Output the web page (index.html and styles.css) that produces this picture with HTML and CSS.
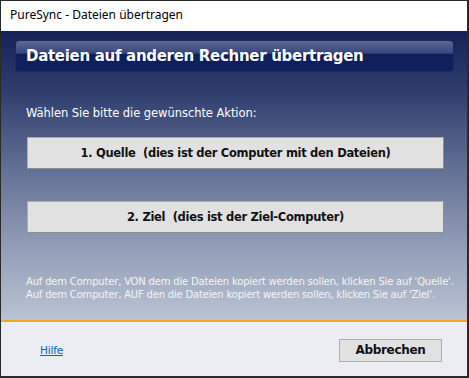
FILE: index.html
```html
<!DOCTYPE html>
<html>
<head>
<meta charset="utf-8">
<link rel="stylesheet" href="styles.css">
</head>
<body>
<div class="window">
  <div class="titlebar">PureSync - Dateien übertragen</div>
  <div class="main">
    <div class="heading"><span>Dateien auf anderen Rechner übertragen</span></div>
    <p class="prompt">Wählen Sie bitte die gewünschte Aktion:</p>
    <div class="choices">
      <button class="choice">1. Quelle&nbsp; (dies ist der Computer mit den Dateien)</button>
      <button class="choice">2. Ziel&nbsp; (dies ist der Ziel-Computer)</button>
    </div>
    <p class="note">Auf dem Computer, VON dem die Dateien kopiert werden sollen, klicken Sie auf 'Quelle'.<br>Auf dem Computer, AUF den die Dateien kopiert werden sollen, klicken Sie auf 'Ziel'.</p>
  </div>
  <div class="footer">
    <a class="help" href="#">Hilfe</a>
    <button class="cancel">Abbrechen</button>
  </div>
</div>
</body>
</html>
```
FILE: styles.css
```css
* { box-sizing: border-box; }
html, body { margin: 0; padding: 0; }
body { width: 469px; height: 378px; overflow: hidden; background: #ffffff; }
.window {
  width: 469px; height: 378px;
  border: 1px solid #2a2a2a;
  border-right-width: 2px;
  border-bottom-width: 2px;
  display: flex; flex-direction: column;
  font-family: "DejaVu Sans", Tahoma, sans-serif;
}
.titlebar {
  height: 30px; background: #ffffff;
  font-family: "Noto Sans", "Open Sans", sans-serif;
  font-size: 12px; color: #000;
  padding: 6px 0 0 9px;
  line-height: 16px;
}
.main {
  height: 291px;
  background: linear-gradient(to bottom, #14225a 0%, #2e3c6c 20%, #5d6b91 45%, #8a96b1 70%, #bac3d3 100%);
  border-bottom: 2px solid #f5a623;
  padding: 9px 13px 0 14px;
  display: flex; flex-direction: column;
}
.heading {
  height: 32px;
  border-radius: 4px;
  background: linear-gradient(to bottom, #5a6892 0%, #38477a 40%, #0f1f5c 45%, #0f1f5c 100%);
  border: 1px solid #1a2860;
  padding: 6px 0 0 10px;
}
.heading span {
  display: block;
  font-family: "DejaVu Sans", Verdana, sans-serif;
  font-weight: bold; font-size: 15px; color: #ffffff;
  line-height: 18px;
  letter-spacing: -0.3px;
}
.prompt {
  margin: 34px 0 0 11px;
  font-size: 11.5px; color: #ffffff;
  line-height: 14px;
  letter-spacing: -0.05px;
}
.choices {
  margin: 17px 0 0 12px;
  display: flex; flex-direction: column; gap: 32px;
  width: 417px;
}
.choice {
  height: 32px;
  background: #e1e1e1;
  border: 1px solid #adadad;
  border-right-color: #8d8d8d;
  border-bottom-color: #8d8d8d;
  font-family: "DejaVu Sans", Tahoma, sans-serif;
  font-weight: bold; font-size: 11.5px; color: #111;
  letter-spacing: -0.3px;
  padding: 0;
}
.note {
  margin: 42px 0 0 11px;
  font-size: 10px; color: #f4f4f4;
  line-height: 13px;
  letter-spacing: -0.18px;
  white-space: nowrap;
}
.footer {
  flex: 1;
  background: #ecedf2;
  display: flex; align-items: center; justify-content: space-between;
  padding: 2px 25px 0 39px;
}
.help {
  color: #0066cc; text-decoration: underline;
  font-size: 10.5px;
  letter-spacing: -0.2px;
}
.cancel {
  width: 103px; height: 23px;
  background: #e1e1e1;
  border: 1px solid #adadad;
  font-family: "DejaVu Sans", Tahoma, sans-serif;
  font-weight: bold; font-size: 12px; color: #111;
  letter-spacing: -0.3px;
  padding: 0;
}
```
